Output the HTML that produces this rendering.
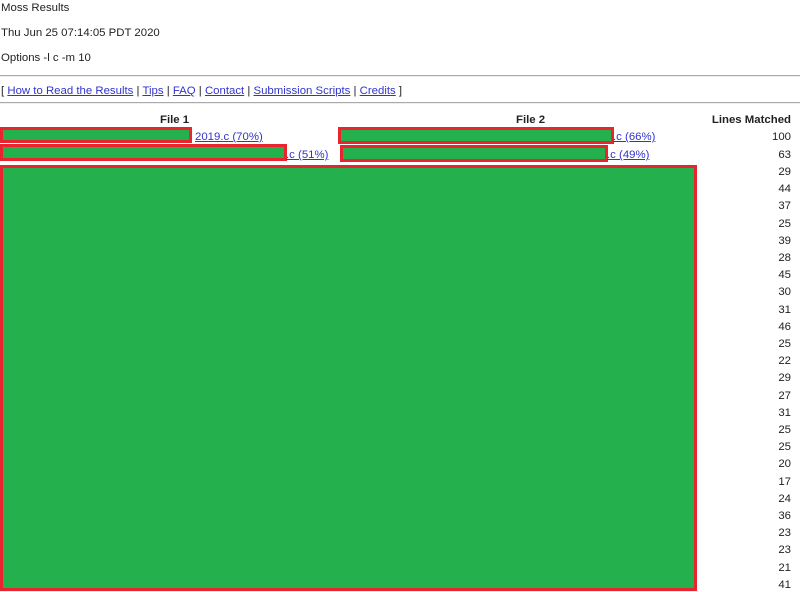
<!DOCTYPE html>
<html><head><meta charset="utf-8"><style>
body{margin:0;width:800px;height:592px;overflow:hidden;background:#fff;font-family:"Liberation Sans","DejaVu Sans",sans-serif;font-size:11.4px;color:#222;position:relative}
.a{position:absolute;white-space:nowrap;line-height:14px}
a{color:#3333cc;text-decoration:underline}
.box{position:absolute;background:#23b04d;border:3px solid #e8242e;box-sizing:border-box}
.hr{position:absolute;left:0;width:800px;height:0;border-top:1px solid #aaa;border-bottom:1px solid #eee}
.n{position:absolute;right:9px;line-height:14px}
b{font-weight:bold}
</style></head><body>
<div class="a" style="left:1px;top:1px">Moss Results</div>
<div class="a" style="left:1px;top:26px">Thu Jun 25 07:14:05 PDT 2020</div>
<div class="a" style="left:1px;top:51px">Options -l c -m 10</div>
<div class="hr" style="top:75px"></div>
<div class="a" style="left:1px;top:84px">[ <a>How to Read the Results</a> | <a>Tips</a> | <a>FAQ</a> | <a>Contact</a> | <a>Submission Scripts</a> | <a>Credits</a> ]</div>
<div class="hr" style="top:102px"></div>
<div class="a" style="left:160px;top:113px"><b>File 1</b></div>
<div class="a" style="left:516px;top:113px"><b>File 2</b></div>
<div class="a" style="right:9px;top:113px"><b>Lines Matched</b></div>
<div class="box" style="left:0;top:127px;width:192px;height:16px"></div>
<div class="a" style="left:195px;top:130px"><a>2019.c (70%)</a></div>
<div class="box" style="left:338px;top:127px;width:276px;height:17px"></div>
<div class="a" style="left:613px;top:130px"><a>.c (66%)</a></div>
<div class="box" style="left:0;top:144px;width:287px;height:17px"></div>
<div class="a" style="left:286px;top:148px"><a>.c (51%)</a></div>
<div class="box" style="left:340px;top:145px;width:268px;height:17px"></div>
<div class="a" style="left:607px;top:148px"><a>.c (49%)</a></div>
<div class="box" style="left:0;top:165px;width:697px;height:426px"></div>
<div id="nums"></div>
<script>
var v=[29,44,37,25,39,28,45,30,31,46,25,22,29,27,31,25,25,20,17,24,36,23,23,21,41],h='';
h+='<div class="n" style="top:130px">100</div><div class="n" style="top:148px">63</div>';
for(var i=0;i<v.length;i++)h+='<div class="n" style="top:'+(165+i*17.2).toFixed(1)+'px">'+v[i]+'</div>';
document.getElementById('nums').innerHTML=h;
</script>
</body></html>
